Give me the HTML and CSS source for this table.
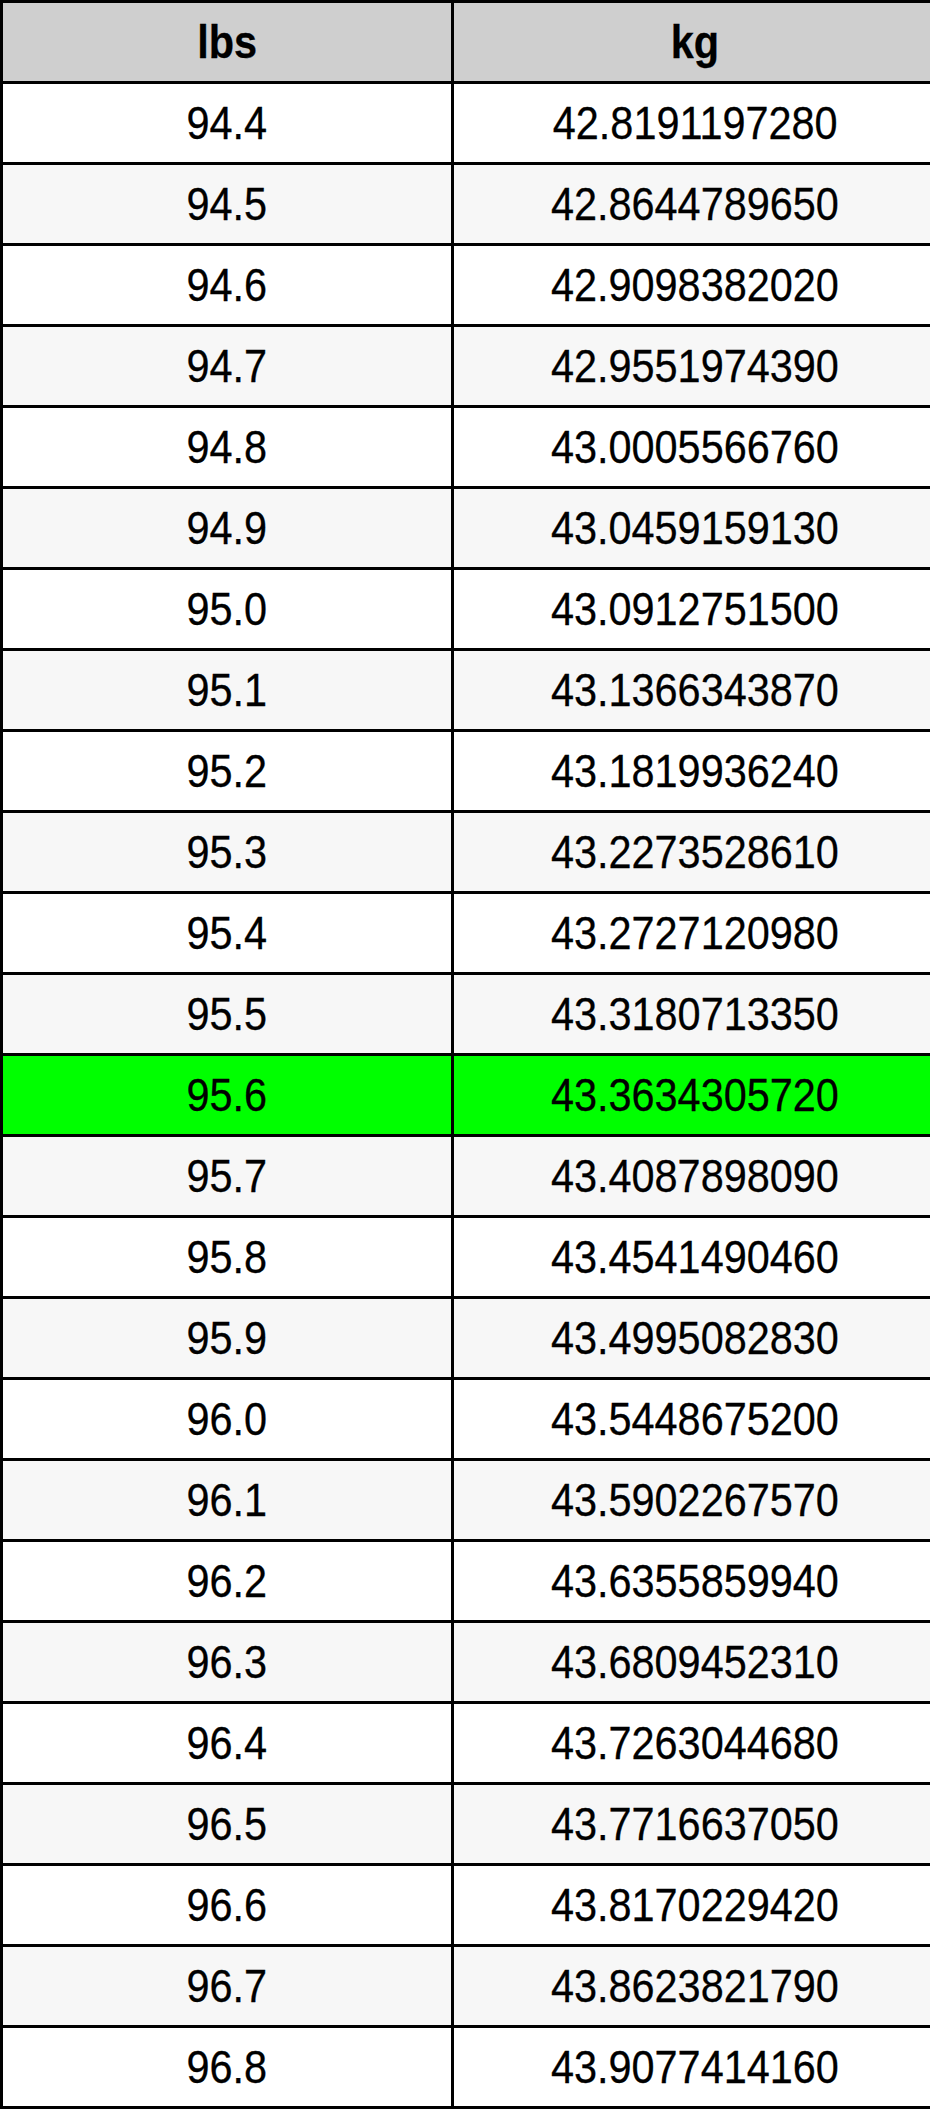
FILE: index.html
```html
<!DOCTYPE html>
<html>
<head>
<meta charset="utf-8">
<link rel="stylesheet" href="styles.css">
</head>
<body>
<table class="conv">
<thead>
<tr><th class="c1"><span>lbs</span></th><th class="c2"><span>kg</span></th></tr>
</thead>
<tbody>
<tr><td><span>94.4</span></td><td><span>42.8191197280</span></td></tr>
<tr class="alt"><td><span>94.5</span></td><td><span>42.8644789650</span></td></tr>
<tr><td><span>94.6</span></td><td><span>42.9098382020</span></td></tr>
<tr class="alt"><td><span>94.7</span></td><td><span>42.9551974390</span></td></tr>
<tr><td><span>94.8</span></td><td><span>43.0005566760</span></td></tr>
<tr class="alt"><td><span>94.9</span></td><td><span>43.0459159130</span></td></tr>
<tr><td><span>95.0</span></td><td><span>43.0912751500</span></td></tr>
<tr class="alt"><td><span>95.1</span></td><td><span>43.1366343870</span></td></tr>
<tr><td><span>95.2</span></td><td><span>43.1819936240</span></td></tr>
<tr class="alt"><td><span>95.3</span></td><td><span>43.2273528610</span></td></tr>
<tr><td><span>95.4</span></td><td><span>43.2727120980</span></td></tr>
<tr class="alt"><td><span>95.5</span></td><td><span>43.3180713350</span></td></tr>
<tr class="hl"><td><span>95.6</span></td><td><span>43.3634305720</span></td></tr>
<tr class="alt"><td><span>95.7</span></td><td><span>43.4087898090</span></td></tr>
<tr><td><span>95.8</span></td><td><span>43.4541490460</span></td></tr>
<tr class="alt"><td><span>95.9</span></td><td><span>43.4995082830</span></td></tr>
<tr><td><span>96.0</span></td><td><span>43.5448675200</span></td></tr>
<tr class="alt"><td><span>96.1</span></td><td><span>43.5902267570</span></td></tr>
<tr><td><span>96.2</span></td><td><span>43.6355859940</span></td></tr>
<tr class="alt"><td><span>96.3</span></td><td><span>43.6809452310</span></td></tr>
<tr><td><span>96.4</span></td><td><span>43.7263044680</span></td></tr>
<tr class="alt"><td><span>96.5</span></td><td><span>43.7716637050</span></td></tr>
<tr><td><span>96.6</span></td><td><span>43.8170229420</span></td></tr>
<tr class="alt"><td><span>96.7</span></td><td><span>43.8623821790</span></td></tr>
<tr><td><span>96.8</span></td><td><span>43.9077414160</span></td></tr>
</tbody>
</table>
</body>
</html>
```

FILE: styles.css
```css
html, body {
  margin: 0;
  padding: 0;
  background: #ffffff;
}
.conv {
  border-collapse: collapse;
  width: 930px;
  table-layout: fixed;
  font-family: "Liberation Sans", Arial, sans-serif;
  font-size: 46px;
  color: #000;
}
.conv th, .conv td {
  border: 3px solid #000;
  height: 78px;
  padding: 0;
  text-align: center;
  vertical-align: middle;
  line-height: 1;
}
.conv th span, .conv td span {
  display: inline-block;
  transform: scaleX(0.9);
  -webkit-text-stroke: 0.3px #000;
}
.conv th {
  background: #cfcfcf;
  font-weight: bold;
}
.conv .c1 { width: 448px; }
.conv .c2 { width: 482px; }
.conv tr.alt td { background: #f7f7f7; }
.conv tr.hl td { background: #00ff00; }
```
